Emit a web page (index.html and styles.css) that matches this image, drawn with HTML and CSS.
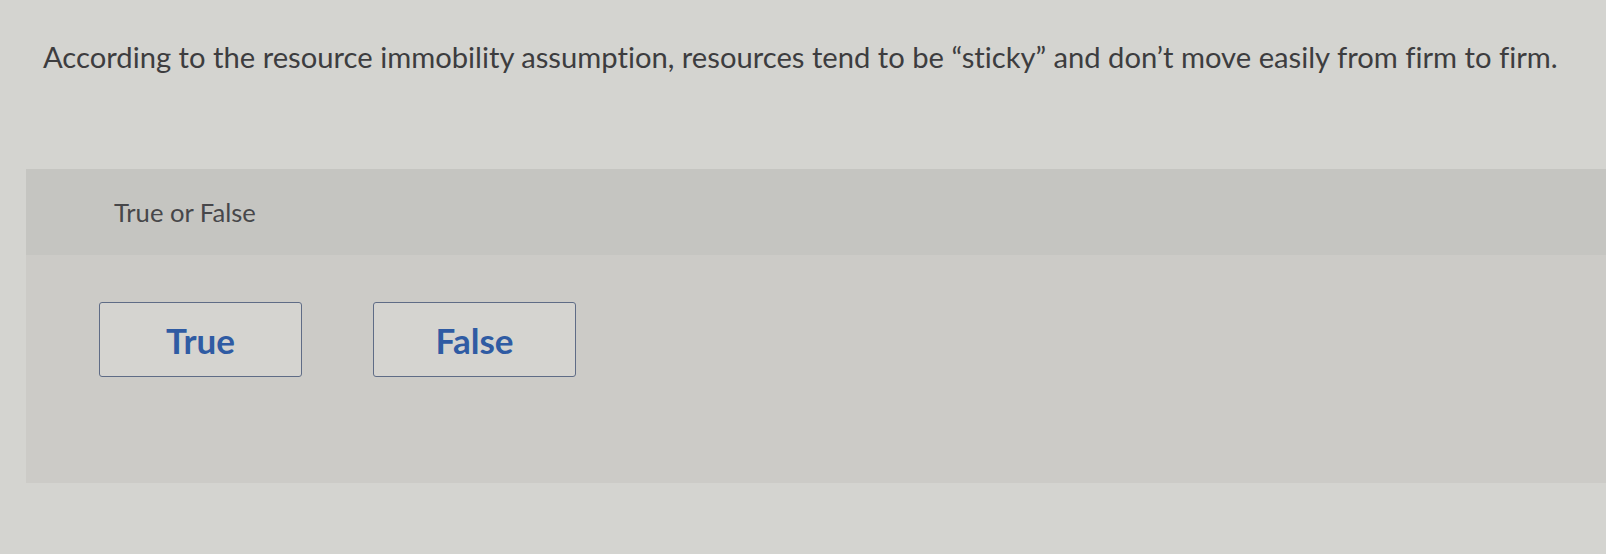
FILE: index.html
```html
<!DOCTYPE html>
<html lang="en">
<head>
    <meta charset="UTF-8">
    <meta name="viewport" content="width=device-width, initial-scale=1.0">
    <title>True or False</title>
    <link rel="stylesheet" href="styles.css">
</head>
<body>
    <p class="prompt">According to the resource immobility assumption, resources tend to be “sticky” and don’t move easily from firm to firm.</p>

    <div class="answer-panel">
        <div class="panel-head">True or False</div>
        <div class="panel-body">
            <button class="choice">True</button>
            <button class="choice">False</button>
        </div>
    </div>
</body>
</html>
```

FILE: styles.css
```css
body {
    margin: 0;
    font-family: Lato, "Open Sans", sans-serif;
    font-variant-ligatures: none;
    background-color: #d4d4d0;
    color: #3d3d3f;
}
.prompt {
    margin: 0;
    padding: 39px 0 0 43px;
    font-size: 29.2px;
    line-height: 36px;
    height: 130px;
    white-space: nowrap;
}
.answer-panel {
    margin-left: 26px;
    background-color: #cccbc7;
    height: 314px;
}
.panel-head {
    height: 86px;
    padding-left: 88px;
    display: flex;
    align-items: center;
    background-color: #c5c5c1;
    font-size: 25.6px;
    color: #47474a;
}
.panel-body {
    display: flex;
    gap: 71px;
    padding: 47px 0 0 73px;
}
.choice {
    width: 203px;
    height: 75px;
    background-color: #d5d4d0;
    border: 1.5px solid #5f6c86;
    border-radius: 3px;
    font-family: Lato, "Open Sans", sans-serif;
    font-size: 35px;
    font-weight: 700;
    color: #2f5ba3;
    cursor: pointer;
}
```
